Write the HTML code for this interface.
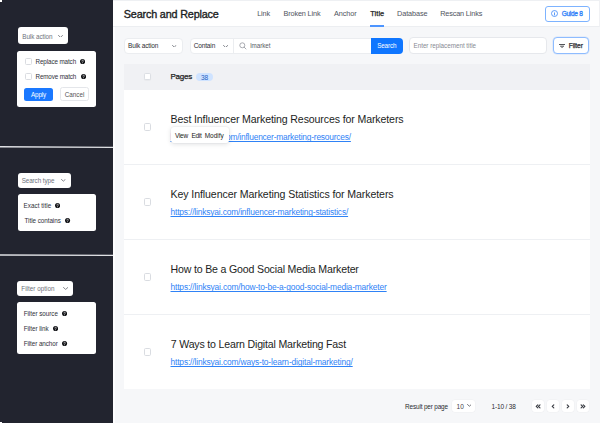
<!DOCTYPE html>
<html><head><meta charset="utf-8">
<style>
*{box-sizing:border-box;margin:0;padding:0}
html,body{width:600px;height:423px;overflow:hidden;background:#f6f7f9;font-family:"Liberation Sans",sans-serif;position:relative}
.a{position:absolute;display:block}
.t{position:absolute;white-space:nowrap;line-height:1}
</style></head><body>
<div class="a" style="left:0px;top:0px;width:113.40px;height:423.00px;background:#22242f;border-radius:0;"></div>
<div class="a" style="left:0px;top:0px;width:1.50px;height:1.50px;background:#fff;border-radius:0;"></div>
<div class="a" style="left:0px;top:421.5px;width:1.50px;height:1.50px;background:#fff;border-radius:0;"></div>
<div class="a" style="left:17.8px;top:27.4px;width:50.20px;height:16.40px;background:#fff;border-radius:3px;"></div>
<svg class="a" style="left:57.50px;top:34.60px" width="5.00" height="2.80" viewBox="-0.5 -0.5 5.00 2.80"><path d="M0 0L2.00 1.80L4.00 0" stroke="#6f727a" stroke-width="0.85" fill="none" stroke-linecap="round" stroke-linejoin="round"/></svg>
<div class="a" style="left:17.4px;top:50.9px;width:78.50px;height:56.10px;background:#fff;border-radius:2.5px;"></div>
<div class="a" style="left:25.1px;top:58.1px;width:6.80px;height:6.80px;background:#fff;border-radius:1.5px;border:0.8px solid #dadce1;"></div>
<svg class="a" style="left:80.25px;top:58.95px" width="5.1" height="5.1" viewBox="0 0 16 16"><circle cx="8" cy="8" r="8" fill="#0d0e12"/><path d="M5.6 6.2a2.4 2.4 0 1 1 3.4 2.2c-.7.3-1 .7-1 1.3v.4" stroke="#fff" stroke-width="1.9" fill="none" stroke-linecap="round"/><circle cx="8" cy="12.2" r="1.1" fill="#fff"/></svg>
<div class="a" style="left:25.1px;top:73.4px;width:6.80px;height:6.80px;background:#fff;border-radius:1.5px;border:0.8px solid #dadce1;"></div>
<svg class="a" style="left:80.65px;top:74.05px" width="5.1" height="5.1" viewBox="0 0 16 16"><circle cx="8" cy="8" r="8" fill="#0d0e12"/><path d="M5.6 6.2a2.4 2.4 0 1 1 3.4 2.2c-.7.3-1 .7-1 1.3v.4" stroke="#fff" stroke-width="1.9" fill="none" stroke-linecap="round"/><circle cx="8" cy="12.2" r="1.1" fill="#fff"/></svg>
<div class="a" style="left:24.2px;top:87.5px;width:29.00px;height:13.20px;background:#1a78ff;border-radius:2.5px;"></div>
<div class="a" style="left:60.3px;top:87.3px;width:28.60px;height:13.40px;background:#fff;border-radius:2.5px;border:0.7px solid #e4e6ea;"></div>
<svg class="a" style="left:0;top:0" width="113" height="423"><path d="M0 146.7L113 147.4M0 255L113 255.4" stroke="#dfe0e4" stroke-width="1.35"/></svg>
<div class="a" style="left:17.6px;top:172.9px;width:53.40px;height:14.70px;background:#fff;border-radius:3px;"></div>
<svg class="a" style="left:61.40px;top:179.27px" width="4.70" height="2.66" viewBox="-0.5 -0.5 4.70 2.66"><path d="M0 0L1.85 1.66L3.70 0" stroke="#6f727a" stroke-width="0.85" fill="none" stroke-linecap="round" stroke-linejoin="round"/></svg>
<div class="a" style="left:17.6px;top:194.2px;width:78.30px;height:36.70px;background:#fff;border-radius:2.5px;"></div>
<svg class="a" style="left:55.35px;top:202.65px" width="5.1" height="5.1" viewBox="0 0 16 16"><circle cx="8" cy="8" r="8" fill="#0d0e12"/><path d="M5.6 6.2a2.4 2.4 0 1 1 3.4 2.2c-.7.3-1 .7-1 1.3v.4" stroke="#fff" stroke-width="1.9" fill="none" stroke-linecap="round"/><circle cx="8" cy="12.2" r="1.1" fill="#fff"/></svg>
<svg class="a" style="left:65.45px;top:217.85px" width="5.1" height="5.1" viewBox="0 0 16 16"><circle cx="8" cy="8" r="8" fill="#0d0e12"/><path d="M5.6 6.2a2.4 2.4 0 1 1 3.4 2.2c-.7.3-1 .7-1 1.3v.4" stroke="#fff" stroke-width="1.9" fill="none" stroke-linecap="round"/><circle cx="8" cy="12.2" r="1.1" fill="#fff"/></svg>
<div class="a" style="left:17.4px;top:281.1px;width:55.70px;height:14.80px;background:#fff;border-radius:3px;"></div>
<svg class="a" style="left:62.80px;top:287.03px" width="5.30" height="2.93" viewBox="-0.5 -0.5 5.30 2.93"><path d="M0 0L2.15 1.93L4.30 0" stroke="#6f727a" stroke-width="0.85" fill="none" stroke-linecap="round" stroke-linejoin="round"/></svg>
<div class="a" style="left:17.4px;top:302.4px;width:78.80px;height:51.20px;background:#fff;border-radius:2.5px;"></div>
<svg class="a" style="left:62.25px;top:310.55px" width="5.1" height="5.1" viewBox="0 0 16 16"><circle cx="8" cy="8" r="8" fill="#0d0e12"/><path d="M5.6 6.2a2.4 2.4 0 1 1 3.4 2.2c-.7.3-1 .7-1 1.3v.4" stroke="#fff" stroke-width="1.9" fill="none" stroke-linecap="round"/><circle cx="8" cy="12.2" r="1.1" fill="#fff"/></svg>
<svg class="a" style="left:53.05px;top:325.65px" width="5.1" height="5.1" viewBox="0 0 16 16"><circle cx="8" cy="8" r="8" fill="#0d0e12"/><path d="M5.6 6.2a2.4 2.4 0 1 1 3.4 2.2c-.7.3-1 .7-1 1.3v.4" stroke="#fff" stroke-width="1.9" fill="none" stroke-linecap="round"/><circle cx="8" cy="12.2" r="1.1" fill="#fff"/></svg>
<svg class="a" style="left:62.45px;top:340.75px" width="5.1" height="5.1" viewBox="0 0 16 16"><circle cx="8" cy="8" r="8" fill="#0d0e12"/><path d="M5.6 6.2a2.4 2.4 0 1 1 3.4 2.2c-.7.3-1 .7-1 1.3v.4" stroke="#fff" stroke-width="1.9" fill="none" stroke-linecap="round"/><circle cx="8" cy="12.2" r="1.1" fill="#fff"/></svg>
<div class="a" style="left:113.4px;top:0px;width:1.80px;height:423.00px;background:#fdfdfe;border-radius:0;"></div>
<div class="a" style="left:113px;top:0px;width:487.00px;height:27.00px;background:#fff;border-radius:0;border-top:1px solid #eef0f3;border-bottom:0.8px solid #eceef1;border-right:1px solid #f0f1f4;box-sizing:border-box"></div>
<div class="a" style="left:370.1px;top:25.0px;width:14.20px;height:1.80px;background:#4d95ff;border-radius:0;"></div>
<div class="a" style="left:545.1px;top:6.2px;width:45.10px;height:15.40px;background:#fff;border-radius:3px;border:0.9px solid #7db3ff;"></div>
<svg class="a" style="left:550.8px;top:10.3px" width="7" height="7" viewBox="0 0 14 14"><circle cx="7" cy="7" r="6" stroke="#3b86f7" stroke-width="1.6" fill="none"/><path d="M7 6.2v3.8" stroke="#3b86f7" stroke-width="1.7" stroke-linecap="round"/><circle cx="7" cy="4.2" r="0.9" fill="#3b86f7"/></svg>
<div class="a" style="left:123.5px;top:37.5px;width:59.00px;height:16.80px;background:#fff;border-radius:4px;border:0.7px solid #ebedf0;"></div>
<svg class="a" style="left:172.00px;top:44.71px" width="4.50" height="2.58" viewBox="-0.5 -0.5 4.50 2.58"><path d="M0 0L1.75 1.57L3.50 0" stroke="#6f727a" stroke-width="0.85" fill="none" stroke-linecap="round" stroke-linejoin="round"/></svg>
<div class="a" style="left:189.5px;top:37.5px;width:182.00px;height:16.80px;background:#fff;border-radius:4px 0 0 4px;border:0.7px solid #ebedf0;"></div>
<div class="a" style="left:233.3px;top:37.5px;width:0.70px;height:16.80px;background:#ebedf0;border-radius:0;"></div>
<svg class="a" style="left:222.50px;top:44.55px" width="5.20" height="2.89" viewBox="-0.5 -0.5 5.20 2.89"><path d="M0 0L2.10 1.89L4.20 0" stroke="#6f727a" stroke-width="0.85" fill="none" stroke-linecap="round" stroke-linejoin="round"/></svg>
<svg class="a" style="left:239px;top:42px" width="8" height="8" viewBox="0 0 16 16"><circle cx="6.6" cy="6.6" r="5" stroke="#8d9098" stroke-width="1.5" fill="none"/><path d="M10.4 10.4L14 14" stroke="#8d9098" stroke-width="1.5" stroke-linecap="round"/></svg>
<div class="a" style="left:371px;top:37.5px;width:31.70px;height:16.80px;background:#0f76ff;border-radius:0 4px 4px 0;"></div>
<div class="a" style="left:409.3px;top:37.3px;width:137.40px;height:16.80px;background:#fff;border-radius:4px;border:0.7px solid #e6e8ec;"></div>
<div class="a" style="left:553px;top:37.3px;width:36.20px;height:16.80px;background:#fff;border-radius:4px;border:0.9px solid #8ebcff;box-shadow:0 0 0 0.6px rgba(80,150,255,0.18)"></div>
<svg class="a" style="left:558.6px;top:43.6px" width="6.2" height="4.4" viewBox="0 0 16 11.4"><path d="M1 1.2h14M4 5.7h8M6.6 10.2h2.8" stroke="#2a2c31" stroke-width="2.2" stroke-linecap="round"/></svg>
<div class="a" style="left:123.6px;top:64px;width:466.00px;height:325.20px;background:#fff;border-radius:0;"></div>
<div class="a" style="left:123.6px;top:64px;width:466.00px;height:25.50px;background:#f0f1f4;border-radius:0;"></div>
<div class="a" style="left:144.3px;top:73.4px;width:6.70px;height:6.70px;background:#fff;border-radius:1.6px;border:0.7px solid #dcdfe4;box-shadow:0 0.5px 1px rgba(0,0,0,0.06)"></div>
<div class="a" style="left:196.3px;top:72.9px;width:16.70px;height:7.90px;background:#cfe3ff;border-radius:4px;"></div>
<div class="a" style="left:123.6px;top:164.2px;width:466.00px;height:0.80px;background:#eef0f3;border-radius:0;"></div>
<div class="a" style="left:123.6px;top:239.2px;width:466.00px;height:0.80px;background:#eef0f3;border-radius:0;"></div>
<div class="a" style="left:123.6px;top:314.2px;width:466.00px;height:0.80px;background:#eef0f3;border-radius:0;"></div>
<div class="a" style="left:144.0px;top:122.9px;width:7.10px;height:7.80px;background:#fff;border-radius:1.6px;border:0.9px solid #d9dce1;"></div>
<div class="a" style="left:144.0px;top:197.9px;width:7.10px;height:7.80px;background:#fff;border-radius:1.6px;border:0.9px solid #d9dce1;"></div>
<div class="a" style="left:144.0px;top:272.9px;width:7.10px;height:7.80px;background:#fff;border-radius:1.6px;border:0.9px solid #d9dce1;"></div>
<div class="a" style="left:144.0px;top:347.9px;width:7.10px;height:7.80px;background:#fff;border-radius:1.6px;border:0.9px solid #d9dce1;"></div>
<div class="a" style="left:452.1px;top:399.8px;width:23.30px;height:12.50px;background:#fff;border-radius:3px;box-shadow:0 0 0 0.5px rgba(0,0,0,0.035)"></div>
<svg class="a" style="left:466.50px;top:404.44px" width="4.80" height="2.71" viewBox="-0.5 -0.5 4.80 2.71"><path d="M0 0L1.90 1.71L3.80 0" stroke="#5c5f66" stroke-width="0.85" fill="none" stroke-linecap="round" stroke-linejoin="round"/></svg>
<div class="a" style="left:531.8px;top:399.9px;width:12.50px;height:12.60px;background:#fff;border-radius:3px;box-shadow:0 0 0 0.5px rgba(0,0,0,0.035)"></div>
<div class="a" style="left:546.9px;top:399.9px;width:12.30px;height:12.60px;background:#fff;border-radius:3px;box-shadow:0 0 0 0.5px rgba(0,0,0,0.035)"></div>
<div class="a" style="left:562.1px;top:399.9px;width:11.90px;height:12.60px;background:#fff;border-radius:3px;box-shadow:0 0 0 0.5px rgba(0,0,0,0.035)"></div>
<div class="a" style="left:576.9px;top:399.9px;width:12.30px;height:12.60px;background:#fff;border-radius:3px;box-shadow:0 0 0 0.5px rgba(0,0,0,0.035)"></div>
<svg class="a" style="left:0;top:0" width="600" height="423"><path d="M537.80 404.80L536.20 406.30L537.80 407.80M540.00 404.80L538.40 406.30L540.00 407.80M553.80 404.80L552.20 406.30L553.80 407.80M567.20 404.80L568.80 406.30L567.20 407.80M581.10 404.80L582.70 406.30L581.10 407.80M583.30 404.80L584.90 406.30L583.30 407.80" stroke="#3a3d44" stroke-width="1.15" fill="none" stroke-linecap="round" stroke-linejoin="round"/></svg>
<div class="t" style="left:22.30px;top:34.00px;font-size:6.3px;letter-spacing:-0.070px;color:#6e717b;font-weight:normal;">Bulk action</div>
<div class="t" style="left:35.50px;top:59.00px;font-size:6.3px;letter-spacing:-0.112px;color:#2f3138;font-weight:normal;">Replace match</div>
<div class="t" style="left:35.50px;top:74.00px;font-size:6.3px;letter-spacing:-0.145px;color:#2f3138;font-weight:normal;">Remove match</div>
<div class="t" style="left:31.00px;top:92.00px;font-size:6.3px;letter-spacing:-0.137px;color:#fff;font-weight:normal;">Apply</div>
<div class="t" style="left:64.65px;top:92.00px;font-size:6.3px;letter-spacing:0.020px;color:#555;font-weight:normal;">Cancel</div>
<div class="t" style="left:21.65px;top:178.00px;font-size:6.3px;letter-spacing:-0.085px;color:#6e717b;font-weight:normal;">Search type</div>
<div class="t" style="left:23.60px;top:203.00px;font-size:6.3px;letter-spacing:0.030px;color:#2f3138;font-weight:normal;">Exact title</div>
<div class="t" style="left:24.50px;top:218.00px;font-size:6.3px;letter-spacing:-0.042px;color:#2f3138;font-weight:normal;">Title contains</div>
<div class="t" style="left:21.30px;top:286.00px;font-size:6.3px;letter-spacing:0.025px;color:#6e717b;font-weight:normal;">Filter option</div>
<div class="t" style="left:23.70px;top:311.00px;font-size:6.3px;letter-spacing:-0.033px;color:#2f3138;font-weight:normal;">Filter source</div>
<div class="t" style="left:23.70px;top:326.00px;font-size:6.3px;letter-spacing:-0.035px;color:#2f3138;font-weight:normal;">Filter link</div>
<div class="t" style="left:23.70px;top:341.00px;font-size:6.3px;letter-spacing:-0.075px;color:#2f3138;font-weight:normal;">Filter anchor</div>
<div class="t" style="left:123.75px;top:9.00px;font-size:10.8px;letter-spacing:-0.162px;color:#1c1e23;font-weight:normal;;-webkit-text-stroke:0.35px #1c1e23">Search and Replace</div>
<div class="t" style="left:257.20px;top:10.00px;font-size:7.3px;letter-spacing:-0.133px;color:#4f545e;font-weight:normal;">Link</div>
<div class="t" style="left:283.50px;top:10.00px;font-size:7.3px;letter-spacing:-0.150px;color:#4f545e;font-weight:normal;">Broken Link</div>
<div class="t" style="left:334.00px;top:10.00px;font-size:7.3px;letter-spacing:-0.100px;color:#4f545e;font-weight:normal;">Anchor</div>
<div class="t" style="left:370.30px;top:10.00px;font-size:7.4px;letter-spacing:0.050px;color:#1c1e23;font-weight:normal;;-webkit-text-stroke:0.25px #1c1e23">Title</div>
<div class="t" style="left:397.10px;top:10.00px;font-size:7.3px;letter-spacing:-0.114px;color:#4f545e;font-weight:normal;">Database</div>
<div class="t" style="left:440.20px;top:10.00px;font-size:7.3px;letter-spacing:-0.155px;color:#4f545e;font-weight:normal;">Rescan Links</div>
<div class="t" style="left:561.70px;top:11.00px;font-size:6.5px;letter-spacing:-0.275px;color:#2f7ff8;font-weight:normal;;-webkit-text-stroke:0.3px #2f7ff8">Guide 8</div>
<div class="t" style="left:128.00px;top:43.00px;font-size:6.5px;letter-spacing:-0.150px;color:#2a2c31;font-weight:normal;">Bulk action</div>
<div class="t" style="left:193.65px;top:43.00px;font-size:6.5px;letter-spacing:-0.125px;color:#2a2c31;font-weight:normal;">Contain</div>
<div class="t" style="left:250.25px;top:43.00px;font-size:6.3px;letter-spacing:-0.083px;color:#5a5d65;font-weight:normal;">lmarket</div>
<div class="t" style="left:377.15px;top:43.00px;font-size:6.3px;letter-spacing:-0.130px;color:#fff;font-weight:normal;">Search</div>
<div class="t" style="left:413.50px;top:43.00px;font-size:6.3px;letter-spacing:-0.020px;color:#878a92;font-weight:normal;">Enter replacement title</div>
<div class="t" style="left:568.75px;top:43.00px;font-size:6.7px;letter-spacing:-0.150px;color:#2a2c31;font-weight:normal;;-webkit-text-stroke:0.25px #2a2c31">Filter</div>
<div class="t" style="left:170.40px;top:73.00px;font-size:8.0px;letter-spacing:-0.225px;color:#1c1e23;font-weight:normal;;-webkit-text-stroke:0.25px #1c1e23">Pages</div>
<div class="t" style="left:201.05px;top:75.00px;font-size:6.6px;letter-spacing:-0.300px;color:#1f5fc4;font-weight:normal;">38</div>
<div class="t" style="left:170.50px;top:114.00px;font-size:10.6px;letter-spacing:-0.124px;color:#1c1e23;font-weight:normal;">Best Influencer Marketing Resources for Marketers</div>
<div class="t" style="left:170.50px;top:133.00px;font-size:8.4px;letter-spacing:-0.201px;color:#2f82f6;font-weight:normal;text-decoration:underline;text-decoration-thickness:0.5px;text-underline-offset:0.9px;text-decoration-skip-ink:none">https://linksyai.com/influencer-marketing-resources/</div>
<div class="t" style="left:170.50px;top:189.00px;font-size:10.6px;letter-spacing:-0.098px;color:#1c1e23;font-weight:normal;">Key Influencer Marketing Statistics for Marketers</div>
<div class="t" style="left:170.50px;top:208.00px;font-size:8.4px;letter-spacing:-0.162px;color:#2f82f6;font-weight:normal;text-decoration:underline;text-decoration-thickness:0.5px;text-underline-offset:0.9px;text-decoration-skip-ink:none">https://linksyai.com/influencer-marketing-statistics/</div>
<div class="t" style="left:170.50px;top:264.00px;font-size:10.6px;letter-spacing:-0.176px;color:#1c1e23;font-weight:normal;">How to Be a Good Social Media Marketer</div>
<div class="t" style="left:170.50px;top:283.00px;font-size:8.4px;letter-spacing:-0.147px;color:#2f82f6;font-weight:normal;text-decoration:underline;text-decoration-thickness:0.5px;text-underline-offset:0.9px;text-decoration-skip-ink:none">https://linksyai.com/how-to-be-a-good-social-media-marketer</div>
<div class="t" style="left:170.75px;top:339.00px;font-size:10.6px;letter-spacing:-0.182px;color:#1c1e23;font-weight:normal;">7 Ways to Learn Digital Marketing Fast</div>
<div class="t" style="left:170.50px;top:358.00px;font-size:8.4px;letter-spacing:-0.146px;color:#2f82f6;font-weight:normal;text-decoration:underline;text-decoration-thickness:0.5px;text-underline-offset:0.9px;text-decoration-skip-ink:none">https://linksyai.com/ways-to-learn-digital-marketing/</div>
<div class="t" style="left:405.10px;top:404.00px;font-size:6.4px;letter-spacing:-0.157px;color:#2a2c31;font-weight:normal;">Result per page</div>
<div class="t" style="left:456.50px;top:404.00px;font-size:6.5px;letter-spacing:0.100px;color:#3f4249;font-weight:normal;">10</div>
<div class="t" style="left:491.60px;top:404.00px;font-size:6.5px;letter-spacing:-0.188px;color:#2a2c31;font-weight:normal;">1-10 / 38</div>
<div class="a" style="left:170.7px;top:127.25px;width:58.30px;height:15.75px;background:#fff;border-radius:3px;box-shadow:0 0 0 0.5px rgba(20,25,40,0.05),0 1px 5px rgba(20,25,40,0.14)"></div>
<div class="t" style="left:175.00px;top:133.00px;font-size:6.5px;letter-spacing:-0.300px;color:#1a1c20;font-weight:normal;">View</div>
<div class="t" style="left:191.40px;top:133.00px;font-size:6.5px;letter-spacing:-0.250px;color:#1a1c20;font-weight:normal;">Edit</div>
<div class="t" style="left:204.75px;top:133.00px;font-size:6.5px;letter-spacing:-0.050px;color:#1a1c20;font-weight:normal;">Modify</div>
</body></html>
